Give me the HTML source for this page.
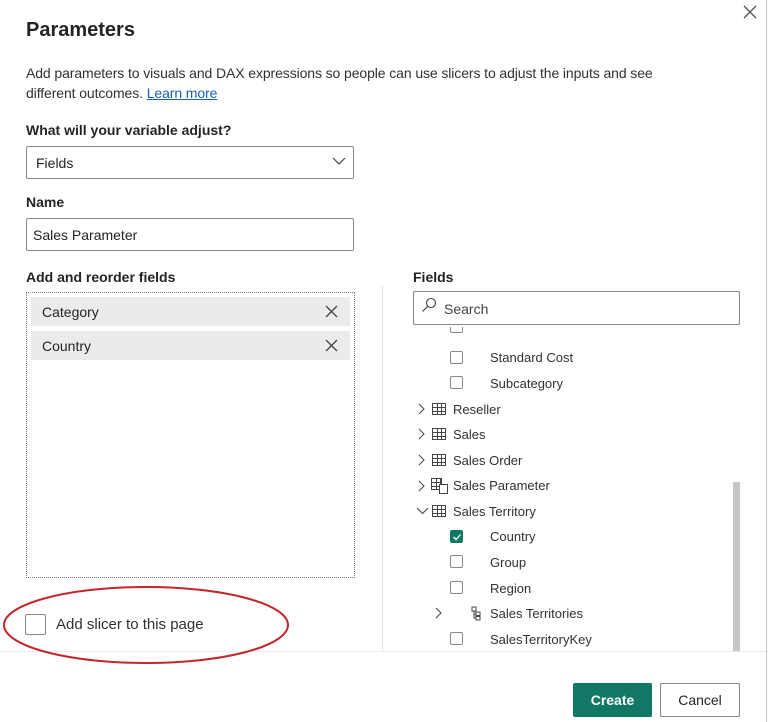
<!DOCTYPE html>
<html><head><style>
*{box-sizing:border-box;margin:0;padding:0}
body{width:768px;height:722px;background:#fff;font-family:"Liberation Sans",sans-serif;color:#252423;position:relative;overflow:hidden}
.a{position:absolute;white-space:nowrap}
.cb{position:absolute;width:13px;height:13px;border:1px solid #8a8886;border-radius:2px;background:#fff}
.t{font-size:13px;color:#323130}
.tbl{position:absolute;width:14px;height:12px;border:1px solid #444;background:
linear-gradient(#444,#444) 0 3px/100% 1px no-repeat,
linear-gradient(#444,#444) 0 7px/100% 1px no-repeat,
linear-gradient(#444,#444) 4px 0/1px 100% no-repeat,
linear-gradient(#444,#444) 8px 0/1px 100% no-repeat}
</style></head><body>
<div class="a" style="left:26px;top:19px;font-size:20px;font-weight:bold;color:#252423">Parameters</div>
<svg class="a" style="left:743px;top:5px" width="14" height="14"><path d="M1 1L13 13M13 1L1 13" stroke="#555" stroke-width="1.3"/></svg>
<div class="a" style="left:26px;top:63px;font-size:14px;letter-spacing:-0.1px;line-height:20px;color:#323130;white-space:normal;width:672px">Add parameters to visuals and DAX expressions so people can use slicers to adjust the inputs and see different outcomes. <span style="color:#1a5fb4;text-decoration:underline">Learn more</span></div>
<div class="a" style="left:26px;top:122px;font-size:14px;font-weight:bold">What will your variable adjust?</div>
<div class="a" style="left:26px;top:146px;width:328px;height:33px;border:1px solid #8a8886;border-radius:2px;font-size:14px;padding:8px 9px">Fields</div>
<svg class="a" style="left:332px;top:157px" width="14" height="9"><path d="M1 1L7 7L13 1" stroke="#444" fill="none" stroke-width="1.2"/></svg>
<div class="a" style="left:26px;top:194px;font-size:14px;font-weight:bold">Name</div>
<div class="a" style="left:26px;top:218px;width:328px;height:33px;border:1px solid #8a8886;border-radius:2px;font-size:14px;padding:8px 6px">Sales Parameter</div>
<div class="a" style="left:26px;top:269px;font-size:14px;font-weight:bold">Add and reorder fields</div>
<div class="a" style="left:26px;top:292px;width:329px;height:286px;border:1px dotted #777"></div>
<div class="a" style="left:31px;top:297px;width:319px;height:29px;background:#edebe9;font-size:14px;padding:7px 11px">Category</div>
<div class="a" style="left:31px;top:331px;width:319px;height:29px;background:#edebe9;font-size:14px;padding:7px 11px">Country</div>
<svg class="a" style="left:325px;top:305px" width="13" height="13"><path d="M1 1L12 12M12 1L1 12" stroke="#444" stroke-width="1.3"/></svg>
<svg class="a" style="left:325px;top:339px" width="13" height="13"><path d="M1 1L12 12M12 1L1 12" stroke="#444" stroke-width="1.3"/></svg>
<div class="a" style="left:382px;top:286px;width:1px;height:366px;background:#e1dfdd"></div>
<div class="a" style="left:413px;top:269px;font-size:14px;font-weight:bold">Fields</div>
<div class="a" style="left:413px;top:291px;width:327px;height:34px;border:1px solid #8a8886;border-radius:2px;font-size:14px;padding:9px 0 0 30px;color:#444">Search</div>
<svg class="a" style="left:421px;top:297px" width="16" height="16"><circle cx="10" cy="6" r="4.5" stroke="#444" fill="none" stroke-width="1.1"/><path d="M7 9L1.5 14.5" stroke="#444" stroke-width="1.2"/></svg>
<div class="cb" style="left:450px;top:327px;height:6px;border-top:none;border-radius:0 0 2px 2px"></div>
<div class="cb" style="left:450px;top:351px"></div><div class="a t" style="left:490px;top:350px">Standard Cost</div>
<div class="cb" style="left:450px;top:376px"></div><div class="a t" style="left:490px;top:376px">Subcategory</div>
<svg class="a" style="left:418px;top:403px" width="8" height="12"><path d="M1 1L6 6L1 11" stroke="#444" fill="none"/></svg><div class="tbl" style="left:432px;top:403px"></div><div class="a t" style="left:453px;top:402px">Reseller</div>
<svg class="a" style="left:418px;top:428px" width="8" height="12"><path d="M1 1L6 6L1 11" stroke="#444" fill="none"/></svg><div class="tbl" style="left:432px;top:428px"></div><div class="a t" style="left:453px;top:427px">Sales</div>
<svg class="a" style="left:418px;top:454px" width="8" height="12"><path d="M1 1L6 6L1 11" stroke="#444" fill="none"/></svg><div class="tbl" style="left:432px;top:454px"></div><div class="a t" style="left:453px;top:453px">Sales Order</div>
<svg class="a" style="left:418px;top:480px" width="8" height="12"><path d="M1 1L6 6L1 11" stroke="#444" fill="none"/></svg><div class="tbl" style="left:431px;top:478px;width:11px"></div><div class="a" style="left:439px;top:484px;width:9px;height:10px;border:1px solid #444;background:#fff"></div><div class="a t" style="left:453px;top:478px">Sales Parameter</div>
<svg class="a" style="left:416px;top:507px" width="13" height="8"><path d="M1 1L6.5 6.5L12 1" stroke="#444" fill="none"/></svg><div class="tbl" style="left:432px;top:505px"></div><div class="a t" style="left:453px;top:504px">Sales Territory</div>
<div class="cb" style="left:450px;top:530px;background:#117865;border-color:#117865"></div><svg class="a" style="left:452px;top:532px" width="10" height="10"><path d="M1.5 5L4 7.5L8.5 2.5" stroke="#fff" fill="none" stroke-width="1.3"/></svg><div class="a t" style="left:490px;top:529px">Country</div>
<div class="cb" style="left:450px;top:555px"></div><div class="a t" style="left:490px;top:555px">Group</div>
<div class="cb" style="left:450px;top:581px"></div><div class="a t" style="left:490px;top:581px">Region</div>
<svg class="a" style="left:435px;top:607px" width="8" height="12"><path d="M1 1L6 6L1 11" stroke="#444" fill="none"/></svg>
<svg class="a" style="left:471px;top:606px" width="10" height="15"><rect x="1" y="1" width="4" height="4" stroke="#444" fill="none"/><rect x="5" y="6" width="4" height="3.5" stroke="#444" fill="none"/><rect x="5" y="10.5" width="4" height="3.5" stroke="#444" fill="none"/><path d="M3 5V12H5M3 8H5" stroke="#444" fill="none"/></svg>
<div class="a t" style="left:490px;top:606px">Sales Territories</div>
<div class="cb" style="left:450px;top:632px"></div><div class="a t" style="left:490px;top:632px">SalesTerritoryKey</div>
<div class="a" style="left:733px;top:482px;width:7px;height:170px;background:#c8c6c4"></div>
<div class="a" style="left:0;top:651px;width:768px;height:1px;background:#edebe9"></div>
<div class="a" style="left:766px;top:0;width:1px;height:722px;background:#c8c6c4"></div>
<div class="a" style="left:25px;top:614px;width:21px;height:21px;border:1px solid #8a8886;border-radius:2px"></div>
<div class="a" style="left:56px;top:616px;font-size:15px;color:#323130">Add slicer to this page</div>
<svg class="a" style="left:0;top:580px" width="300" height="90"><ellipse cx="146" cy="45" rx="142" ry="38" stroke="#c1272d" stroke-width="2" fill="none"/></svg>
<div class="a" style="left:573px;top:683px;width:79px;height:34px;background:#117865;border-radius:2px;color:#fff;font-size:14px;font-weight:bold;text-align:center;line-height:34px">Create</div>
<div class="a" style="left:660px;top:683px;width:80px;height:34px;border:1px solid #8a8886;border-radius:2px;font-size:14px;text-align:center;line-height:32px">Cancel</div>
</body></html>
